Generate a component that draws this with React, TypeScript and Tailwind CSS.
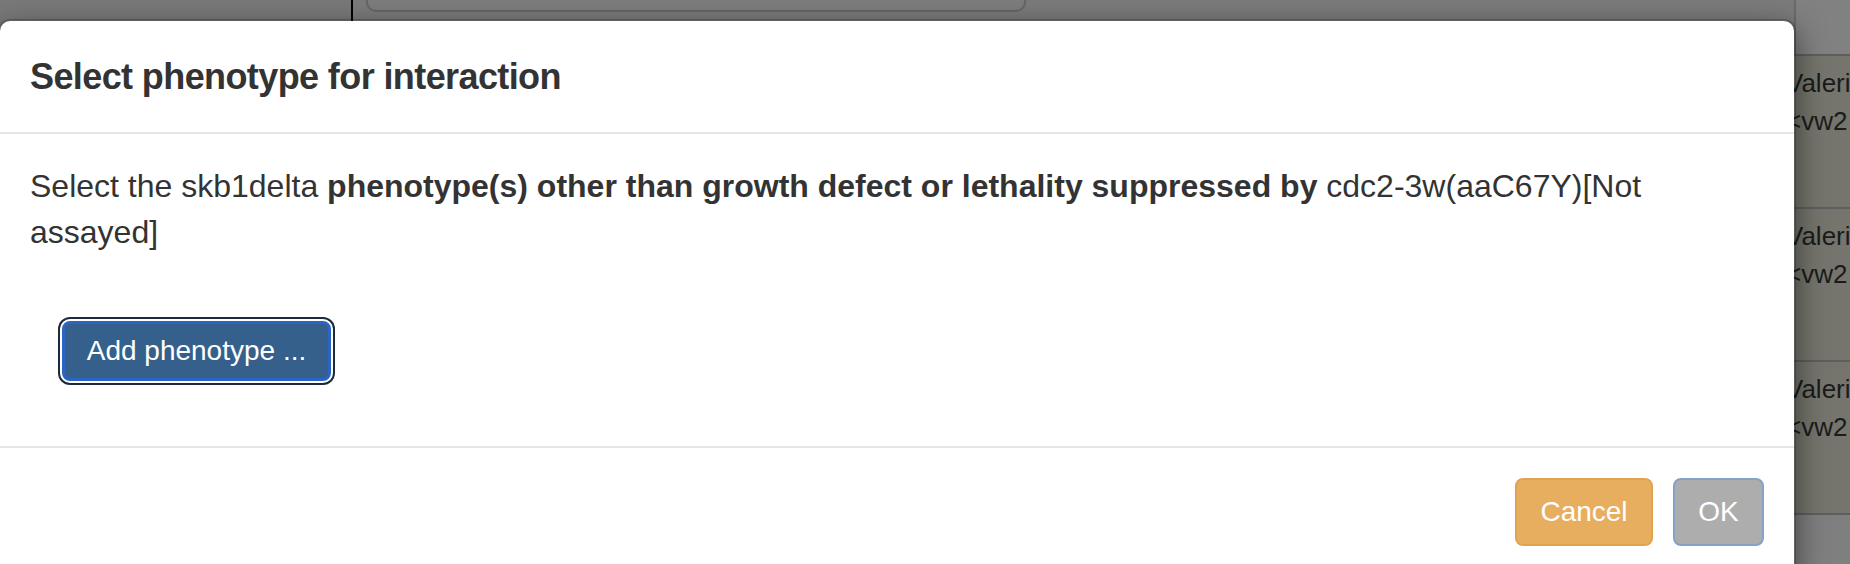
import React from 'react';

const rows = [0, 1, 2];

export default function App() {
  return (
    <div className="relative w-[1850px] h-[564px] overflow-hidden bg-[#7b7b7b] font-['Liberation_Sans',Arial,sans-serif]">
      {/* page behind the backdrop */}
      <div className="flex h-[54px]">
        <div className="w-[351px] bg-[#797979]" />
        <div className="w-[2px] bg-black" />
        <div className="ml-[13px] w-[660px] h-[12px] rounded-b-[10px] border-2 border-t-0 border-[#666] bg-[#7d7d7d]" />
        <div className="flex-1" />
        <div className="w-[2px] bg-[#6a6a6a]" />
        <div className="w-[54px] bg-[#818181]" />
      </div>
      {rows.map((r) => (
        <div key={r} className="flex h-[153px] border-t-2 border-[#5e5e5e] bg-[#75756d]">
          <div className="w-[1786px] shrink-0" />
          <div className="pt-[8px] text-[26px] leading-[38px] text-[#1b1b1b] whitespace-nowrap">
            <div>Valerie</div>
            <div>&lt;vw2</div>
          </div>
        </div>
      ))}
      <div className="h-[60px] border-t-2 border-[#5e5e5e] bg-[#7f7f7f]" />

      {/* modal */}
      <div className="absolute left-[-2px] top-[19px] w-[1798px] rounded-[12px] border-2 border-black/20 bg-white bg-clip-padding shadow-[0_10px_30px_rgba(0,0,0,0.5)]">
        <div className="border-b-2 border-[#e5e5e5] p-[30px]">
          <h4 className="m-0 text-[36px] leading-[1.42857] font-bold tracking-[-0.6px] text-[#333]">
            Select phenotype for interaction
          </h4>
        </div>
        <div className="p-[30px]">
          <p className="m-0 text-[32px] leading-[1.42857] text-[#333]">
            Select the skb1delta <strong>phenotype(s) other than growth defect or lethality suppressed by</strong> cdc2-3w(aaC67Y)[Not assayed]
          </p>
          <div className="pl-[32px] pt-[65px] pb-[35px]">
            <button className="h-[60px] w-[269px] rounded-[8px] border-[3px] border-[#2b63c6] bg-[#36608c] text-[28px] leading-none text-white shadow-[0_0_0_2px_#ffffff,0_0_0_4px_#1b2a3c]">
              Add phenotype ...
            </button>
          </div>
        </div>
        <div className="flex justify-end gap-[20px] border-t-2 border-[#e5e5e5] p-[30px]">
          <button className="h-[68px] w-[138px] rounded-[8px] border-2 border-[#e0a352] bg-[#e8ae5f] text-[28px] leading-none text-white">
            Cancel
          </button>
          <button className="h-[68px] w-[91px] rounded-[8px] border-2 border-[#82a3c7] bg-[#adadad] text-[28px] leading-none text-white">
            OK
          </button>
        </div>
      </div>
    </div>
  );
}
